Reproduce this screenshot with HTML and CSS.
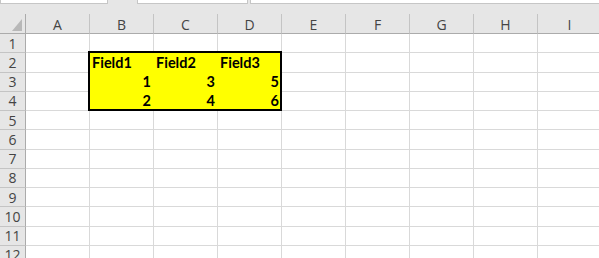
FILE: index.html
```html
<!DOCTYPE html>
<html lang="en">
<head>
  <meta charset="UTF-8">
  <title>Sheet1</title>
  <link rel="stylesheet" href="styles.css">
</head>
<body>
  <div class="toolbar">
    <div class="box name-box"></div>
    <div class="box mid-box"></div>
    <div class="box formula-box"></div>
  </div>

  <div id="sheet" class="sheet"></div>

  <script>
    // Datos de la hoja
    const cols = ['A', 'B', 'C', 'D', 'E', 'F', 'G', 'H', 'I'];
    const data = {
      'B2': 'Field1', 'C2': 'Field2', 'D2': 'Field3',
      'B3': '1', 'C3': '3', 'D3': '5',
      'B4': '2', 'C4': '4', 'D4': '6'
    };
    const sheet = document.getElementById('sheet');

    function add(cls, text, row, col) {
      const el = document.createElement('div');
      el.className = cls;
      if (text !== undefined) el.textContent = text;
      el.style.gridArea = row + ' / ' + col;
      sheet.appendChild(el);
      return el;
    }

    // Cabecera
    add('corner', undefined, 1, 1);
    cols.forEach((c, i) => add('col-head', c, 1, i + 2));

    // Filas
    for (let r = 1; r <= 12; r++) {
      add('row-head', r, r + 1, 1);
      cols.forEach((c, i) => {
        const ref = c + r;
        const cell = add('cell', data[ref], r + 1, i + 2);
        if (i >= 1 && i <= 3 && r >= 2 && r <= 4) cell.classList.add('filled');
        if (data[ref]) cell.classList.add(isNaN(data[ref]) ? 'text' : 'num');
      });
    }

    // Borde de la tabla
    const frame = document.createElement('div');
    frame.className = 'frame';
    sheet.appendChild(frame);
  </script>
</body>
</html>
```

FILE: styles.css
```css
body {
  margin: 0;
  background: #fff;
  overflow: hidden;
  font-family: "Open Sans", Arial, sans-serif;
}
.toolbar {
  height: 14px;
  background: #e6e6e6;
  position: relative;
}
.box {
  position: absolute;
  top: 0;
  height: 3px;
  background: #fff;
  border: 1px solid #c6c6c6;
  border-top: none;
}
.name-box { left: 0; width: 106px; }
.mid-box { left: 137px; width: 109px; }
.formula-box { left: 250px; width: 360px; }

.sheet {
  display: grid;
  grid-template-columns: 26px repeat(9, 64px);
  grid-template-rows: 20px repeat(12, 19.25px);
  width: 602px;
}
.corner, .col-head, .row-head {
  background: #e6e6e6;
  color: #444;
  font-size: 14px;
  box-sizing: border-box;
  display: flex;
  align-items: center;
  justify-content: center;
}
.corner {
  border-right: 1px solid #ababab;
  border-bottom: 1px solid #ababab;
  position: relative;
}
.corner::after {
  content: "";
  position: absolute;
  right: 3px;
  bottom: 2px;
  border-left: 10px solid transparent;
  border-bottom: 12px solid #b8b8b8;
}
.col-head {
  border-right: 1px solid #c4c4c4;
  border-bottom: 1px solid #ababab;
  padding-top: 1px;
}
.row-head {
  border-right: 1px solid #ababab;
  border-bottom: 1px solid #c4c4c4;
  font-size: 14px;
}
.cell {
  box-sizing: border-box;
  border-right: 1px solid #d9d9d9;
  border-bottom: 1px solid #d9d9d9;
  font-family: Lato, "Liberation Sans", sans-serif;
  font-weight: bold;
  font-size: 14.5px;
  color: #000;
  display: flex;
  align-items: flex-end;
  padding: 0 2px 1px 2px;
  white-space: nowrap;
}
.cell.filled {
  background: #ffff00;
  border-color: #ffff00;
}
.cell.num {
  justify-content: flex-end;
}
.frame {
  grid-column: 3 / 6;
  grid-row: 3 / 6;
  border: 2px solid #000;
  margin: -2px 0 0 -2px;
}
```
